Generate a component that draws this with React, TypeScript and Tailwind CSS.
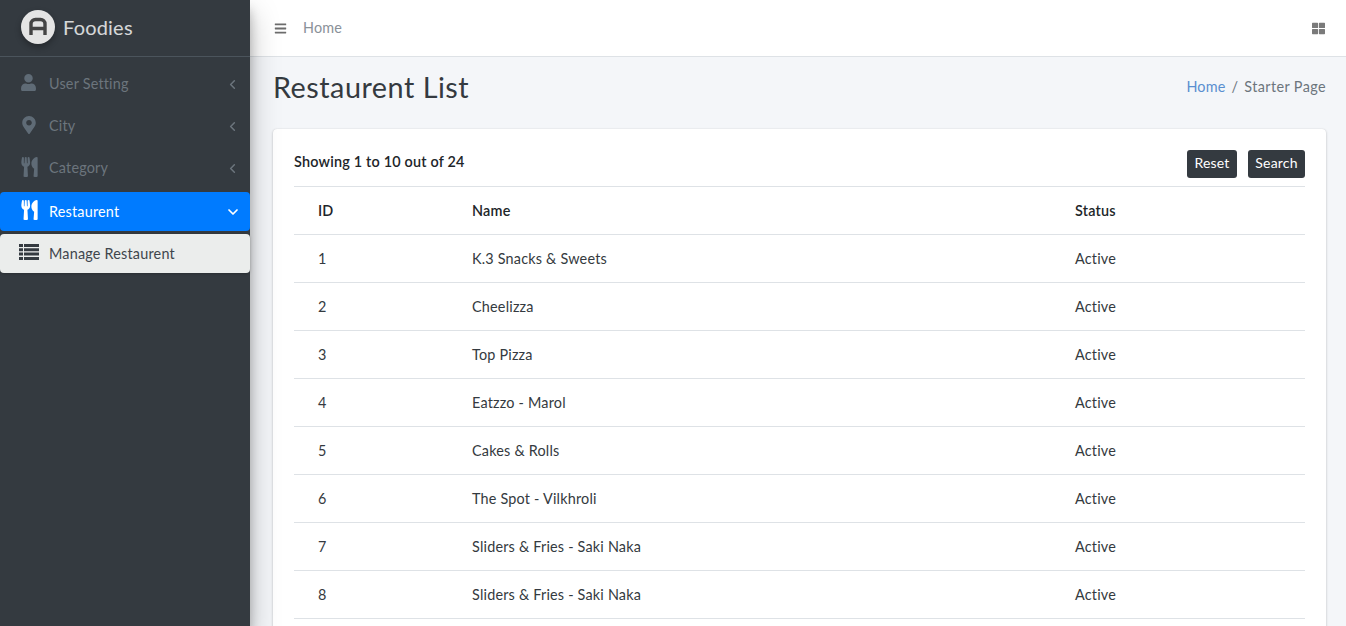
import React from "react";
import { FaUser, FaMapMarkerAlt, FaUtensils, FaBars, FaThLarge } from "react-icons/fa";
import { ChevronLeft, ChevronDown } from "lucide-react";

const rows = [
  { id: 1, name: "K.3 Snacks & Sweets" },
  { id: 2, name: "Cheelizza" },
  { id: 3, name: "Top Pizza" },
  { id: 4, name: "Eatzzo - Marol" },
  { id: 5, name: "Cakes & Rolls" },
  { id: 6, name: "The Spot - Vilkhroli" },
  { id: 7, name: "Sliders & Fries - Saki Naka" },
  { id: 8, name: "Sliders & Fries - Saki Naka" },
];

function NavItem({ icon, label }: { icon: React.ReactNode; label: string }) {
  return (
    <div className="flex h-[42px] items-center pl-[21px] pr-[10px] text-[#6c757d]">
      <span className="mb-[3px] flex w-[28px] justify-start text-[#5f6b76]">{icon}</span>
      <span>{label}</span>
      <ChevronLeft size={15} strokeWidth={2.4} className="ml-auto" />
    </div>
  );
}

export default function App() {
  return (
    <div className="flex h-[626px] overflow-hidden bg-[#f4f6f9] font-['Lato','Liberation_Sans',sans-serif] text-[14.4px] tracking-[0.2px] text-[#343a40]">
      <aside className="z-10 w-[250px] shrink-0 bg-[#343a40] shadow-[0_14px_28px_rgba(0,0,0,0.25),0_10px_10px_rgba(0,0,0,0.22)]">
        <div className="flex h-[57px] items-center border-b border-[#4b545c] pb-[3px] pl-[21px]">
          <span className="flex h-[34px] w-[34px] items-center justify-center rounded-full bg-[#e4e4e4] shadow-[0_3px_6px_rgba(0,0,0,0.3)]">
            <svg width="20" height="20" viewBox="0 0 20 20" fill="none" stroke="#444" strokeWidth="3.4">
              <path d="M3 18V7a4.5 4.5 0 0 1 4.5-4.5h5A4.5 4.5 0 0 1 17 7v11M3 11.5h14" />
            </svg>
          </span>
          <span className="ml-2 text-[20px] tracking-[0.2px] text-white/80">Foodies</span>
        </div>
        <nav className="pt-[6px]">
          <NavItem icon={<FaUser className="h-[17px] w-[15px]" />} label="User Setting" />
          <NavItem icon={<FaMapMarkerAlt className="ml-[1px] h-[18px] w-[14px]" />} label="City" />
          <NavItem icon={<FaUtensils className="h-[20px] w-[17px]" />} label="Category" />
          <div className="mt-[3px] flex h-[39px] items-center rounded-[4px] bg-[#007bff] pl-[21px] pr-[9px] text-white">
            <span className="mb-[3px] flex w-[28px]">
              <FaUtensils className="h-[20px] w-[17px]" />
            </span>
            <span>Restaurent</span>
            <ChevronDown size={16} strokeWidth={2.6} className="ml-auto" />
          </div>
          <div className="mt-[3px] flex h-[39px] items-center rounded-[4px] bg-[#ebedec] pl-[19px] text-[#3f464d] shadow-[0_1px_3px_rgba(0,0,0,0.2)]">
            <span className="mb-[4px] flex w-[30px] text-[#343a40]">
              <svg width="20" height="16" viewBox="0 0 20 16" fill="currentColor">
                <path d="M0 0h4v3H0zM5 0h15v3H5zM0 4.3h4v3H0zM5 4.3h15v3H5zM0 8.6h4v3H0zM5 8.6h15v3H5zM0 13h4v3H0zM5 13h15v3H5z" />
              </svg>
            </span>
            <span>Manage Restaurent</span>
          </div>
        </nav>
      </aside>

      <div className="min-w-0 flex-1">
        <header className="flex h-[57px] items-center border-b border-[#dee2e6] bg-white pl-[24px] pr-[21px] text-[#6c757d]">
          <FaBars className="text-[13px] text-[#6c6c6c]" />
          <span className="ml-[16px] text-[#8a9199]">Home</span>
          <FaThLarge className="ml-auto text-[13px] text-[#7a7a7a]" />
        </header>

        <main className="pl-[23px] pr-[20px]">
          <div className="flex h-[72px] items-start justify-between pt-[13px]">
            <h1 className="text-[28.8px] leading-[34px] font-normal tracking-[0.5px] text-[#343a40]">Restaurent List</h1>
            <div className="mt-[6px] text-[#6c757d]">
              <span className="text-[#5a8fd0]">Home</span>
              <span className="mx-[6px]">/</span>
              <span className="tracking-[0.4px]">Starter Page</span>
            </div>
          </div>

          <section className="rounded-[4px] bg-white px-[21px] pb-[40px] pt-[21px] shadow-[0_0_1px_rgba(0,0,0,0.13),0_1px_3px_rgba(0,0,0,0.2)]">
            <div className="flex h-[36px] items-start justify-between">
              <span className="mt-[1px] font-semibold text-[#212529]">Showing 1 to 10 out of 24</span>
              <div className="flex gap-[11px]">
                <button className="h-[28px] w-[50px] rounded-[3px] bg-[#343a40] pb-[3px] text-[14px] text-white">Reset</button>
                <button className="h-[28px] w-[57px] rounded-[3px] bg-[#343a40] pb-[3px] text-[14px] text-white">Search</button>
              </div>
            </div>
            <table className="w-full table-fixed border-collapse text-left">
              <thead>
                <tr className="h-[48px] border-y border-[#dee2e6] text-[#212529]">
                  <th className="w-[154px] pl-[24px] font-semibold">ID</th>
                  <th className="w-[603px] pl-[24px] font-semibold">Name</th>
                  <th className="pl-[24px] font-semibold">Status</th>
                </tr>
              </thead>
              <tbody>
                {rows.map((r) => (
                  <tr key={r.id} className="h-[48px] border-b border-[#dee2e6]">
                    <td className="pl-[24px]">{r.id}</td>
                    <td className="pl-[24px]">{r.name}</td>
                    <td className="pl-[24px]">Active</td>
                  </tr>
                ))}
              </tbody>
            </table>
          </section>
        </main>
      </div>
    </div>
  );
}
